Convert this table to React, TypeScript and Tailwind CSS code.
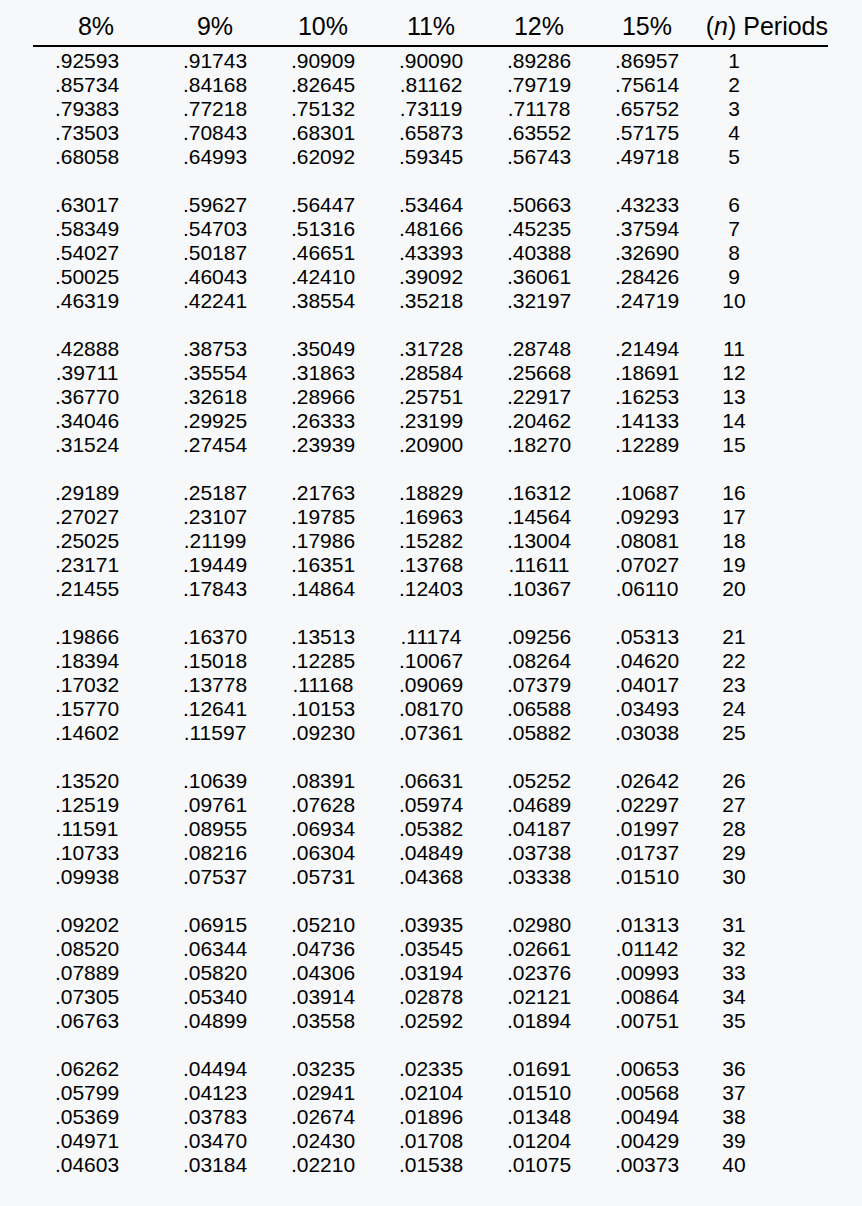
const rates = ["8%", "9%", "10%", "11%", "12%", "15%"];

// present value of $1, rows = periods 1..40, cols = rates above
const rows: string[][] = [
  [".92593", ".91743", ".90909", ".90090", ".89286", ".86957"],
  [".85734", ".84168", ".82645", ".81162", ".79719", ".75614"],
  [".79383", ".77218", ".75132", ".73119", ".71178", ".65752"],
  [".73503", ".70843", ".68301", ".65873", ".63552", ".57175"],
  [".68058", ".64993", ".62092", ".59345", ".56743", ".49718"],
  [".63017", ".59627", ".56447", ".53464", ".50663", ".43233"],
  [".58349", ".54703", ".51316", ".48166", ".45235", ".37594"],
  [".54027", ".50187", ".46651", ".43393", ".40388", ".32690"],
  [".50025", ".46043", ".42410", ".39092", ".36061", ".28426"],
  [".46319", ".42241", ".38554", ".35218", ".32197", ".24719"],
  [".42888", ".38753", ".35049", ".31728", ".28748", ".21494"],
  [".39711", ".35554", ".31863", ".28584", ".25668", ".18691"],
  [".36770", ".32618", ".28966", ".25751", ".22917", ".16253"],
  [".34046", ".29925", ".26333", ".23199", ".20462", ".14133"],
  [".31524", ".27454", ".23939", ".20900", ".18270", ".12289"],
  [".29189", ".25187", ".21763", ".18829", ".16312", ".10687"],
  [".27027", ".23107", ".19785", ".16963", ".14564", ".09293"],
  [".25025", ".21199", ".17986", ".15282", ".13004", ".08081"],
  [".23171", ".19449", ".16351", ".13768", ".11611", ".07027"],
  [".21455", ".17843", ".14864", ".12403", ".10367", ".06110"],
  [".19866", ".16370", ".13513", ".11174", ".09256", ".05313"],
  [".18394", ".15018", ".12285", ".10067", ".08264", ".04620"],
  [".17032", ".13778", ".11168", ".09069", ".07379", ".04017"],
  [".15770", ".12641", ".10153", ".08170", ".06588", ".03493"],
  [".14602", ".11597", ".09230", ".07361", ".05882", ".03038"],
  [".13520", ".10639", ".08391", ".06631", ".05252", ".02642"],
  [".12519", ".09761", ".07628", ".05974", ".04689", ".02297"],
  [".11591", ".08955", ".06934", ".05382", ".04187", ".01997"],
  [".10733", ".08216", ".06304", ".04849", ".03738", ".01737"],
  [".09938", ".07537", ".05731", ".04368", ".03338", ".01510"],
  [".09202", ".06915", ".05210", ".03935", ".02980", ".01313"],
  [".08520", ".06344", ".04736", ".03545", ".02661", ".01142"],
  [".07889", ".05820", ".04306", ".03194", ".02376", ".00993"],
  [".07305", ".05340", ".03914", ".02878", ".02121", ".00864"],
  [".06763", ".04899", ".03558", ".02592", ".01894", ".00751"],
  [".06262", ".04494", ".03235", ".02335", ".01691", ".00653"],
  [".05799", ".04123", ".02941", ".02104", ".01510", ".00568"],
  [".05369", ".03783", ".02674", ".01896", ".01348", ".00494"],
  [".04971", ".03470", ".02430", ".01708", ".01204", ".00429"],
  [".04603", ".03184", ".02210", ".01538", ".01075", ".00373"],
];

const groups = [0, 1, 2, 3, 4, 5, 6, 7].map((g) => rows.slice(g * 5, g * 5 + 5));

function Row({ values, n }: { values: string[]; n: number }) {
  return (
    <div className="flex h-[24px] items-center">
      {values.map((v, i) => (
        <div key={i} className={`w-[108px] text-center ${i === 1 ? "ml-[20px]" : ""}`}>
          {v}
        </div>
      ))}
      <div className="w-[66px] text-center">{n}</div>
    </div>
  );
}

export default function App() {
  return (
    <div
      className="min-h-[1206px] bg-[#f7f8fa] text-black pl-[33px]"
      style={{ fontFamily: '"Liberation Sans", Arial, sans-serif' }}
    >
      {/* header - rates + periods, 2px rule under it */}
      <div className="w-[795px] flex items-end h-[47px] pb-[5px] border-b-2 border-black text-[25px] leading-[28px]">
        {rates.map((r, i) => (
          <div
            key={r}
            className={`w-[108px] text-center ${i === 0 ? "pl-[18px]" : ""} ${i === 1 ? "ml-[20px]" : ""}`}
          >
            {r}
          </div>
        ))}
        <div className="flex-1 text-right">
          (<i>n</i>) Periods
        </div>
      </div>

      {/* table body - groups of five periods */}
      <div className="pt-[2px] text-[21px] leading-[24px] flex flex-col gap-[24px]">
        {groups.map((g, gi) => (
          <div key={gi}>
            {g.map((vals, ri) => (
              <Row key={ri} values={vals} n={gi * 5 + ri + 1} />
            ))}
          </div>
        ))}
      </div>
    </div>
  );
}
